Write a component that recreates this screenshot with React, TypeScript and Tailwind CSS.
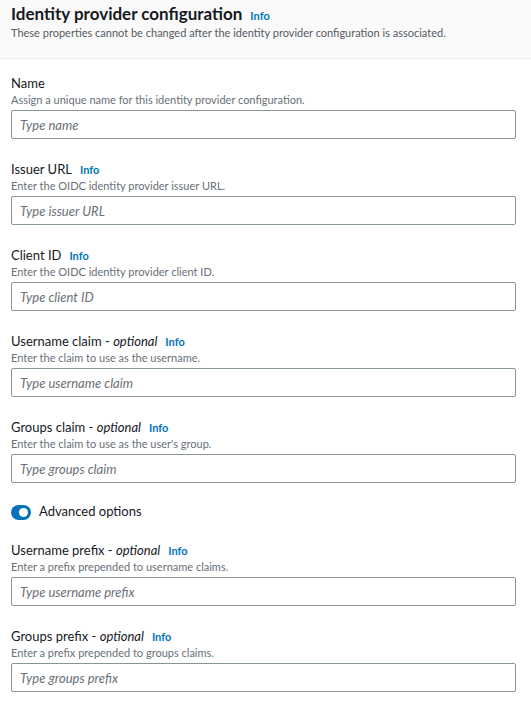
const font = { fontFamily: 'Lato, "Noto Sans", sans-serif' };

type FieldProps = {
  label: string;
  optional?: boolean;
  info?: boolean;
  description: string;
  placeholder: string;
};

function Info() {
  return <span className="ml-2 text-[11px] font-bold text-[#0073bb]">Info</span>;
}

function Field({ label, optional, info, description, placeholder }: FieldProps) {
  return (
    <div className="flex flex-col">
      <div className="flex items-baseline h-[18px] text-[13px] leading-[18px] text-[#16191f]">
        <span>
          {label}
          {optional && (
            <>
              {" - "}
              <i>optional</i>
            </>
          )}
        </span>
        {info && <Info />}
      </div>
      <div className="h-[15px] text-[11px] leading-[15px] text-[#687078]">{description}</div>
      <input
        className="mt-[3px] h-[29px] w-full rounded-[2px] border border-[#879596] px-2 text-[13px] italic text-[#16191f] placeholder:text-[#687078] outline-none"
        style={font}
        placeholder={placeholder}
      />
    </div>
  );
}

export default function App() {
  return (
    <div className="min-h-screen w-full bg-white" style={font}>
      <div className="h-[59px] border-b border-[#eaeded] bg-[#fafafa] px-[11px] pt-[2px]">
        <div className="flex items-baseline">
          <h2 className="text-[17px] font-bold leading-[24px] text-[#16191f]">
            Identity provider configuration
          </h2>
          <Info />
        </div>
        <p className="text-[11px] leading-[14px] text-[#545b64]">
          These properties cannot be changed after the identity provider configuration is associated.
        </p>
      </div>
      <div className="flex flex-col gap-[21px] pl-[11px] pr-[15px] pt-[15px]">
        <Field
          label="Name"
          description="Assign a unique name for this identity provider configuration."
          placeholder="Type name"
        />
        <Field
          label="Issuer URL"
          info
          description="Enter the OIDC identity provider issuer URL."
          placeholder="Type issuer URL"
        />
        <Field
          label="Client ID"
          info
          description="Enter the OIDC identity provider client ID."
          placeholder="Type client ID"
        />
        <Field
          label="Username claim"
          optional
          info
          description="Enter the claim to use as the username."
          placeholder="Type username claim"
        />
        <Field
          label="Groups claim"
          optional
          info
          description="Enter the claim to use as the user's group."
          placeholder="Type groups claim"
        />
        <div className="flex items-center gap-[8px] h-[16px]">
          <div className="relative h-[15px] w-[20px] rounded-full bg-[#0073bb]">
            <div className="absolute right-[3px] top-[3px] h-[9px] w-[9px] rounded-full bg-white" />
          </div>
          <span className="text-[13px] text-[#16191f]">Advanced options</span>
        </div>
        <Field
          label="Username prefix"
          optional
          info
          description="Enter a prefix prepended to username claims."
          placeholder="Type username prefix"
        />
        <Field
          label="Groups prefix"
          optional
          info
          description="Enter a prefix prepended to groups claims."
          placeholder="Type groups prefix"
        />
      </div>
    </div>
  );
}
